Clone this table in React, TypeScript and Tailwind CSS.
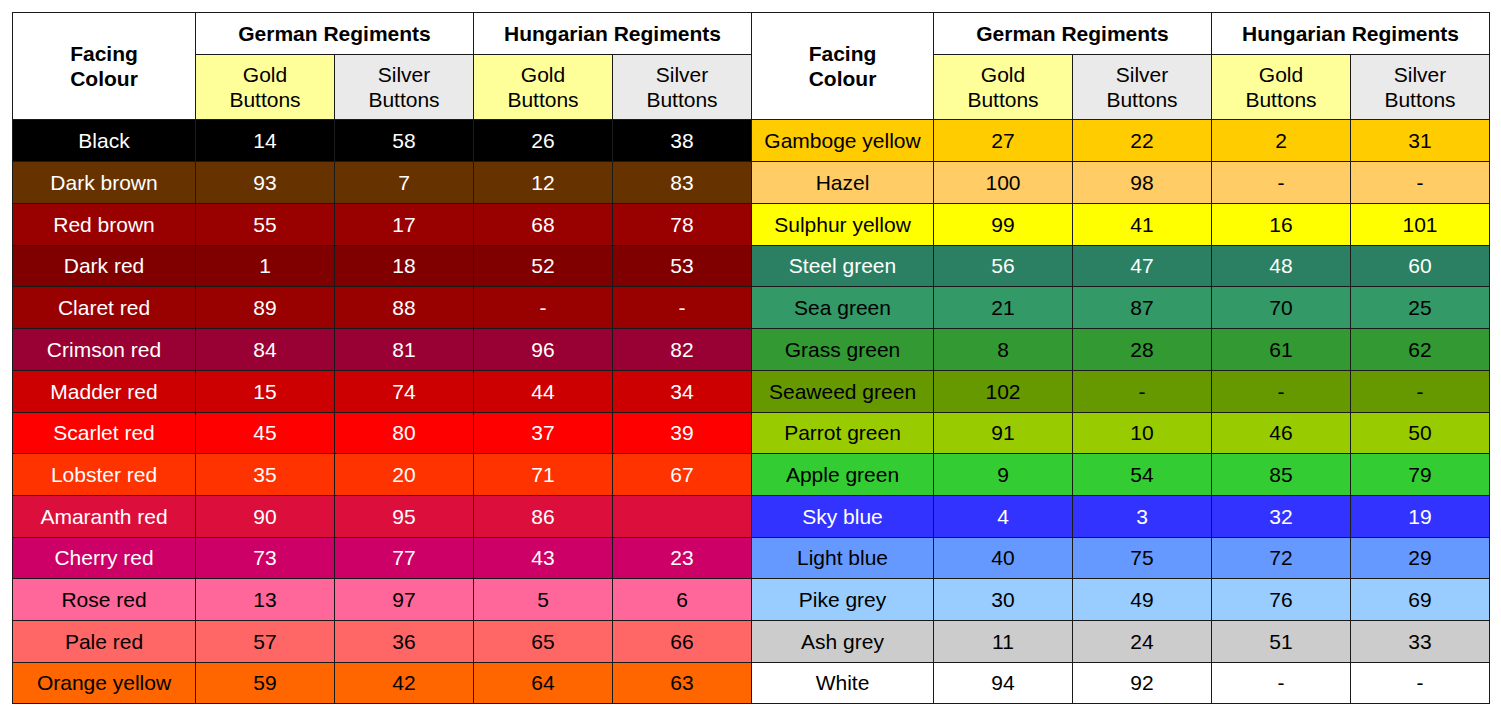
import React from 'react'

type Row = { name: string; bg: string; light: boolean; vals: string[] }

const left: Row[] = [
  { name: 'Black', bg: 'bg-[#000000]', light: true, vals: ['14', '58', '26', '38'] },
  { name: 'Dark brown', bg: 'bg-[#663300]', light: true, vals: ['93', '7', '12', '83'] },
  { name: 'Red brown', bg: 'bg-[#990000]', light: true, vals: ['55', '17', '68', '78'] },
  { name: 'Dark red', bg: 'bg-[#800000]', light: true, vals: ['1', '18', '52', '53'] },
  { name: 'Claret red', bg: 'bg-[#990000]', light: true, vals: ['89', '88', '-', '-'] },
  { name: 'Crimson red', bg: 'bg-[#990033]', light: true, vals: ['84', '81', '96', '82'] },
  { name: 'Madder red', bg: 'bg-[#cc0000]', light: true, vals: ['15', '74', '44', '34'] },
  { name: 'Scarlet red', bg: 'bg-[#ff0000]', light: true, vals: ['45', '80', '37', '39'] },
  { name: 'Lobster red', bg: 'bg-[#ff3300]', light: true, vals: ['35', '20', '71', '67'] },
  { name: 'Amaranth red', bg: 'bg-[#dc0f3c]', light: true, vals: ['90', '95', '86', ''] },
  { name: 'Cherry red', bg: 'bg-[#cc0066]', light: true, vals: ['73', '77', '43', '23'] },
  { name: 'Rose red', bg: 'bg-[#ff6699]', light: false, vals: ['13', '97', '5', '6'] },
  { name: 'Pale red', bg: 'bg-[#ff6666]', light: false, vals: ['57', '36', '65', '66'] },
  { name: 'Orange yellow', bg: 'bg-[#ff6600]', light: false, vals: ['59', '42', '64', '63'] },
]

const right: Row[] = [
  { name: 'Gamboge yellow', bg: 'bg-[#ffcc00]', light: false, vals: ['27', '22', '2', '31'] },
  { name: 'Hazel', bg: 'bg-[#ffcc66]', light: false, vals: ['100', '98', '-', '-'] },
  { name: 'Sulphur yellow', bg: 'bg-[#ffff00]', light: false, vals: ['99', '41', '16', '101'] },
  { name: 'Steel green', bg: 'bg-[#2b7f62]', light: true, vals: ['56', '47', '48', '60'] },
  { name: 'Sea green', bg: 'bg-[#339966]', light: false, vals: ['21', '87', '70', '25'] },
  { name: 'Grass green', bg: 'bg-[#339933]', light: false, vals: ['8', '28', '61', '62'] },
  { name: 'Seaweed green', bg: 'bg-[#669900]', light: false, vals: ['102', '-', '-', '-'] },
  { name: 'Parrot green', bg: 'bg-[#99cc00]', light: false, vals: ['91', '10', '46', '50'] },
  { name: 'Apple green', bg: 'bg-[#33cc33]', light: false, vals: ['9', '54', '85', '79'] },
  { name: 'Sky blue', bg: 'bg-[#3333ff]', light: true, vals: ['4', '3', '32', '19'] },
  { name: 'Light blue', bg: 'bg-[#6699ff]', light: false, vals: ['40', '75', '72', '29'] },
  { name: 'Pike grey', bg: 'bg-[#99ccff]', light: false, vals: ['30', '49', '76', '69'] },
  { name: 'Ash grey', bg: 'bg-[#cccccc]', light: false, vals: ['11', '24', '51', '33'] },
  { name: 'White', bg: 'bg-[#ffffff]', light: false, vals: ['94', '92', '-', '-'] },
]

const heights = ['h-[42px]', 'h-[42px]', 'h-[42px]', 'h-[41px]', 'h-[42px]', 'h-[42px]', 'h-[42px]', 'h-[41px]', 'h-[42px]', 'h-[42px]', 'h-[41px]', 'h-[42px]', 'h-[42px]', 'h-[41px]']

const cell = 'border border-[#1a1a1a] p-0 text-center align-middle'

function HeaderTop() {
  return (
    <>
      <th rowSpan={2} className={`${cell} bg-white font-bold leading-[25px]`}>
        Facing
        <br />
        Colour
      </th>
      <th colSpan={2} className={`${cell} bg-white font-bold h-[42px]`}>German Regiments</th>
      <th colSpan={2} className={`${cell} bg-white font-bold`}>Hungarian Regiments</th>
    </>
  )
}

function HeaderSub() {
  return (
    <>
      <th className={`${cell} bg-[#ffff99] font-normal leading-[25px] h-[65px]`}>Gold<br />Buttons</th>
      <th className={`${cell} bg-[#eaeaea] font-normal leading-[25px]`}>Silver<br />Buttons</th>
      <th className={`${cell} bg-[#ffff99] font-normal leading-[25px]`}>Gold<br />Buttons</th>
      <th className={`${cell} bg-[#eaeaea] font-normal leading-[25px]`}>Silver<br />Buttons</th>
    </>
  )
}

function DataCells({ row }: { row: Row }) {
  const tone = row.light ? 'text-white' : 'text-black'
  return (
    <>
      <td className={`${cell} ${row.bg} ${tone}`}>{row.name}</td>
      {row.vals.map((v, i) => (
        <td key={i} className={`${cell} ${row.bg} ${tone}`}>{v}</td>
      ))}
    </>
  )
}

export default function App() {
  return (
    <div className="bg-white w-[1501px] h-[715px] pt-[12px] pl-[12px] font-['Liberation_Sans',Arial,sans-serif] text-[21px] text-black">
      <table className="table-fixed border-collapse w-[1477px]">
        <colgroup>
          <col className="w-[183px]" />
          <col className="w-[139px]" />
          <col className="w-[139px]" />
          <col className="w-[139px]" />
          <col className="w-[139px]" />
          <col className="w-[182px]" />
          <col className="w-[139px]" />
          <col className="w-[139px]" />
          <col className="w-[139px]" />
          <col className="w-[139px]" />
        </colgroup>
        <thead>
          <tr>
            <HeaderTop />
            <HeaderTop />
          </tr>
          <tr>
            <HeaderSub />
            <HeaderSub />
          </tr>
        </thead>
        <tbody>
          {left.map((row, i) => (
            <tr key={row.name} className={heights[i]}>
              <DataCells row={row} />
              <DataCells row={right[i]} />
            </tr>
          ))}
        </tbody>
      </table>
    </div>
  )
}
